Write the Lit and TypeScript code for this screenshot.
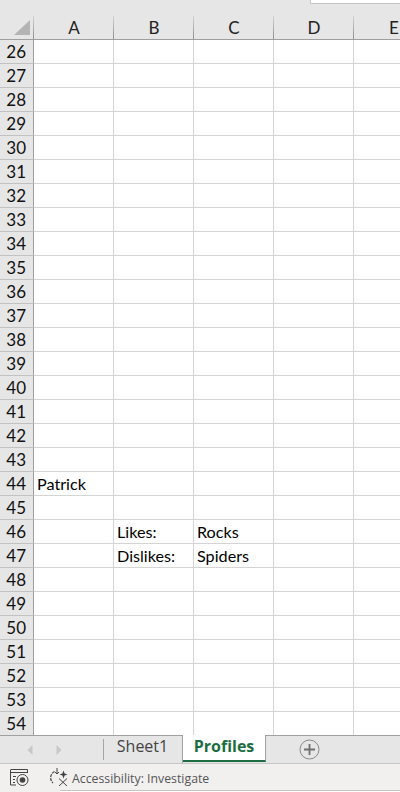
import { LitElement, html, css } from "lit";
import { customElement } from "lit/decorators.js";

const CELLS: Record<number, string[]> = {
  44: ["Patrick", "", "", "", ""],
  46: ["", "Likes:", "Rocks", "", ""],
  47: ["", "Dislikes:", "Spiders", "", ""],
};
const ROWS = Array.from({ length: 29 }, (_, i) => 26 + i);
const COLS = ["A", "B", "C", "D", "E"];

@customElement("app-root")
export class AppRoot extends LitElement {
  static styles = css`
    :host {
      display: flex;
      flex-direction: column;
      width: 400px;
      height: 792px;
      overflow: hidden;
      background: #fff;
      font-family: "Lato", "Liberation Sans", sans-serif;
      color: #000;
    }
    .ribbon-edge {
      height: 16px;
      background: #e6e6e6;
      display: flex;
      justify-content: flex-end;
      flex: none;
    }
    .name-box {
      width: 89px;
      height: 3px;
      background: #fff;
      border-left: 1px solid #c6c6c6;
      border-bottom: 1px solid #c6c6c6;
    }
    .grid {
      display: grid;
      grid-template-columns: 34px repeat(5, 80px);
      grid-auto-rows: 24px;
      flex: none;
      height: 719px;
      overflow: hidden;
    }
    .grid > div {
      box-sizing: border-box;
    }
    .head {
      height: 24px;
      background: linear-gradient(#d2d2d2, #8e8e8e) right / 1px 100% no-repeat, #e6e6e6;
      border-bottom: 1px solid #9f9f9f;
      display: flex;
      align-items: center;
      justify-content: center;
      font-size: 17px;
      color: #222;
    }
    .corner {
      position: relative;
    }
    .corner svg {
      position: absolute;
      left: 13px;
      top: 3px;
    }
    .num {
      background: #e6e6e6;
      border-right: 1px solid #9f9f9f;
      border-bottom: 1px solid #c2c2c2;
      display: flex;
      align-items: center;
      justify-content: flex-end;
      padding-right: 7px;
      font-size: 17px;
      color: #111;
    }
    .cell {
      border-right: 1px solid #d4d4d4;
      border-bottom: 1px solid #d4d4d4;
      padding-left: 3px;
      font-size: 16.2px;
      line-height: 24px;
      white-space: nowrap;
      color: #000;
    }
    .tabs {
      flex: none;
      height: 29px;
      box-sizing: border-box;
      display: flex;
      background: #e6e6e6;
      border-bottom: 1px solid #c6c6c6;
      font-family: "Open Sans", "Liberation Sans", sans-serif;
    }
    .nav {
      width: 103px;
      box-sizing: border-box;
      border-top: 1px solid #a0a0a0;
      display: flex;
      align-items: center;
      flex: none;
      position: relative;
    }
    .sep {
      width: 1px;
      height: 21px;
      background: #a6a6a6;
      margin-top: 3px;
      position: absolute;
      left: 103px;
      top: 0;
    }
    .tab {
      box-sizing: border-box;
      border-top: 1px solid #a0a0a0;
      border-right: 1px solid #a0a0a0;
      width: 80px;
      flex: none;
      display: flex;
      align-items: center;
      justify-content: center;
      font-size: 16px;
      color: #444;
      padding-bottom: 7px;
    }
    .tab.active {
      width: 83px;
      border-top: none;
      background: #fff;
      color: #1c6e42;
      font-weight: 700;
      font-size: 16px;
      border-bottom: 2px solid #1c6e42;
      height: 27px;
      padding-bottom: 3px;
    }
    .rest {
      flex: 1;
      border-top: 1px solid #a0a0a0;
      display: flex;
      align-items: center;
      padding-left: 33px;
    }
    .status {
      flex: none;
      height: 26px;
      box-sizing: border-box;
      background: #f1f0ef;
      display: flex;
      align-items: center;
      font-family: "Open Sans", "Liberation Sans", sans-serif;
      font-size: 12.3px;
      color: #555;
      padding-left: 10px;
    }
    .status span {
      padding-top: 2px;
    }
    .status .macro {
      margin-right: 20px;
    }
    .status .a11y {
      margin-right: 3px;
    }
    .foot {
      flex: 1;
      display: flex;
      background: #f1f0ef;
    }
    .foot-window {
      margin-left: 60px;
      flex: 1;
      background: #fff;
      border-top: 1px solid #c6c6c6;
    }
    svg {
      display: block;
      flex: none;
    }
  `;

  render() {
    return html`
      <div class="ribbon-edge"><div class="name-box"></div></div>
      <div class="grid">
        <div class="head corner">
          <svg width="18" height="18" viewBox="0 0 18 18">
            <path d="M1 16 L17 1 V16 Z" fill="#b4b4b4" />
          </svg>
        </div>
        ${COLS.map((c) => html`<div class="head">${c}</div>`)}
        ${ROWS.map(
          (r) => html`
            <div class="num">${r}</div>
            ${COLS.map((_, i) => html`<div class="cell">${CELLS[r]?.[i] ?? ""}</div>`)}
          `
        )}
      </div>
      <div class="tabs">
        <div class="nav">
          <svg style="margin-left:27px" width="6" height="10" viewBox="0 0 6 10">
            <path d="M5.5 0 L0.5 5 L5.5 10 Z" fill="#c8c8c8" />
          </svg>
          <svg style="margin-left:23px" width="6" height="10" viewBox="0 0 6 10">
            <path d="M0.5 0 L5.5 5 L0.5 10 Z" fill="#c8c8c8" />
          </svg>
          <div class="sep"></div>
        </div>
        <div class="tab">Sheet1</div>
        <div class="tab active">Profiles</div>
        <div class="rest">
          <svg width="21" height="21" viewBox="0 0 21 21">
            <circle cx="10.5" cy="10.5" r="9.5" fill="none" stroke="#8a8a8a" stroke-width="1" />
            <path d="M10.5 5 V16 M5 10.5 H16" stroke="#6f6f6f" stroke-width="1.8" fill="none" />
          </svg>
        </div>
      </div>
      <div class="status">
        <svg class="macro" width="19" height="17" viewBox="0 0 19 17">
          <path d="M1 .5 H17.5 V4 M.5 .5 V16 H6 M3 7.5 H6 M3 10.5 H5 M3 13.5 H5" stroke="#444" fill="none" />
          <path d="M1 3.5 H17" stroke="#444" />
          <circle cx="12.5" cy="11" r="5.5" fill="none" stroke="#444" />
          <circle cx="12.5" cy="11" r="2.8" fill="#444" />
        </svg>
        <svg class="a11y" width="20" height="18" viewBox="0 0 20 18">
          <path d="M5.5 3.5 A7 7 0 0 0 4 15" stroke="#444" fill="none" stroke-width="1.2" stroke-dasharray="3 1" />
          <path d="M8 0 V6 M6 4 L8 6 L10 4" stroke="#444" fill="none" />
          <path d="M14.5 2.5 L15.6 5.4 L18.5 6.5 L15.6 7.6 L14.5 10.5 L13.4 7.6 L10.5 6.5 L13.4 5.4 Z" fill="#444" />
          <path d="M10 10.5 L18 18 M18 10.5 L10 18" stroke="#444" fill="none" />
        </svg>
        <span>Accessibility: Investigate</span>
      </div>
      <div class="foot"><div class="foot-window"></div></div>
    `;
  }
}
